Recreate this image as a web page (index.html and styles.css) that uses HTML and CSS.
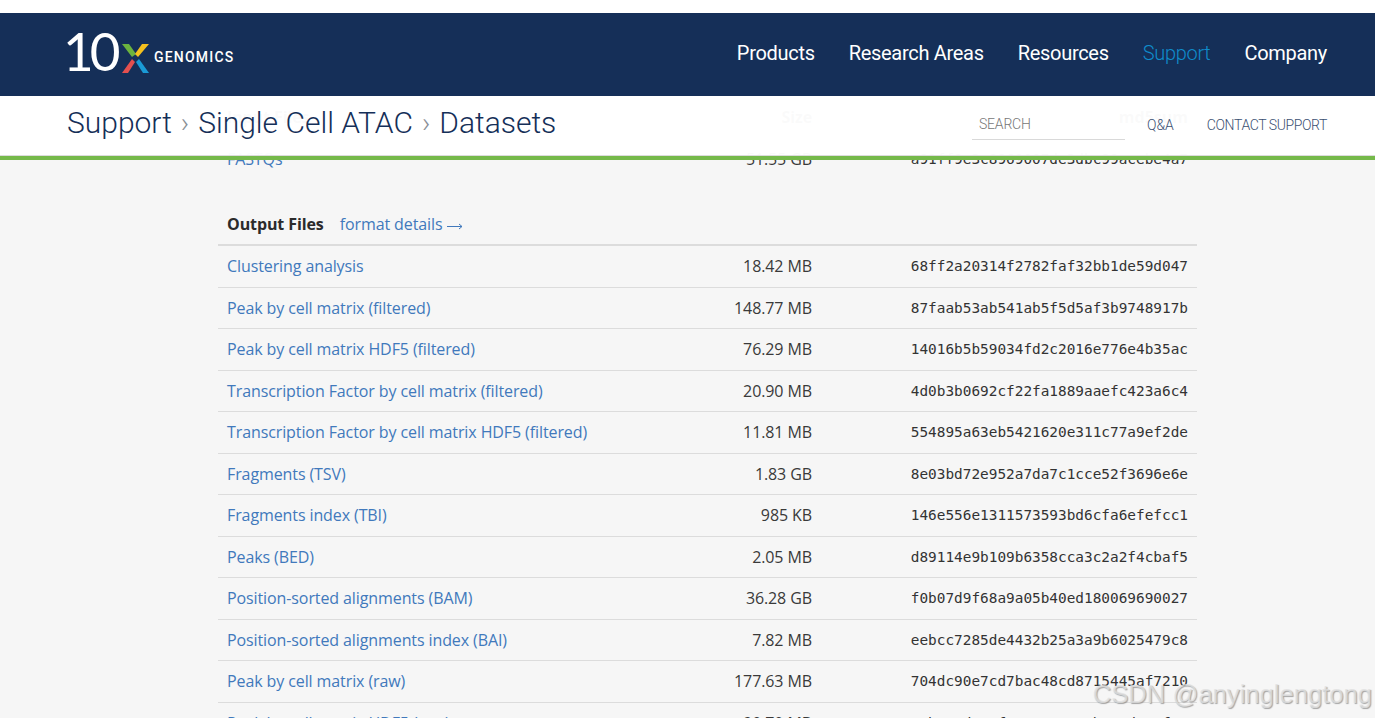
FILE: index.html
```html
<!DOCTYPE html>
<html lang="en">
<head>
<meta charset="utf-8">
<title>Datasets - Single Cell ATAC - Support - 10x Genomics</title>
<link rel="stylesheet" href="styles.css">
</head>
<body>
<header class="site-header">
  <div class="topbar">
    <a class="logo" href="#">
      <span class="logo-ten">10</span>
      <svg class="logo-x" viewBox="0 0 27 29" width="27" height="29" aria-hidden="true">
        <polygon fill="#6cb33f" points="0,0 7,0 14,10 10,13"/>
        <polygon fill="#f4c01e" points="20,0 27,0 16,13 13,10"/>
        <polygon fill="#e4504f" points="0,29 10,15 13,18 6,29"/>
        <polygon fill="#1a9ad6" points="27,29 21,29 14,18 17,15"/>
      </svg>
      <span class="logo-word">GENOMICS</span>
    </a>
    <nav class="mainnav">
      <a href="#">Products</a>
      <a href="#">Research Areas</a>
      <a href="#">Resources</a>
      <a href="#" class="active">Support</a>
      <a href="#">Company</a>
    </nav>
  </div>
  <div class="subbar">
    <div class="crumbs">
      <a href="#">Support</a><span class="sep">›</span><a href="#">Single Cell ATAC</a><span class="sep">›</span><a href="#">Datasets</a>
    </div>
    <div class="subnav">
      <span class="search">SEARCH</span>
      <a href="#">Q&amp;A</a>
      <a href="#">CONTACT SUPPORT</a>
    </div>
  </div>
</header>

<main class="content">
  <section class="files">
    <div class="row head head-input"><span class="name"><b>Input Files</b></span><b class="size">Size</b><b class="md5 md5-head">md5sum</b></div>
    <div class="row row-last"><a class="name" href="#">FASTQs</a><span class="size">51.55 GB</span><code class="md5">a91ff9e3c8969007de3dbc99acebe4a7</code></div>
  </section>
  <section class="files output">
    <div class="row head"><span class="name"><b>Output Files</b><a class="details" href="#">format details <svg class="arrow" viewBox="0 0 16 8" width="16" height="8" aria-hidden="true"><path d="M0 4.5H15M12 2l3 2.5L12 7" fill="none" stroke="currentColor" stroke-width="1"/></svg></a></span></div>
    <div class="row"><a class="name" href="#">Clustering analysis</a><span class="size">18.42 MB</span><code class="md5">68ff2a20314f2782faf32bb1de59d047</code></div>
    <div class="row"><a class="name" href="#">Peak by cell matrix (filtered)</a><span class="size">148.77 MB</span><code class="md5">87faab53ab541ab5f5d5af3b9748917b</code></div>
    <div class="row"><a class="name" href="#">Peak by cell matrix HDF5 (filtered)</a><span class="size">76.29 MB</span><code class="md5">14016b5b59034fd2c2016e776e4b35ac</code></div>
    <div class="row"><a class="name" href="#">Transcription Factor by cell matrix (filtered)</a><span class="size">20.90 MB</span><code class="md5">4d0b3b0692cf22fa1889aaefc423a6c4</code></div>
    <div class="row"><a class="name" href="#">Transcription Factor by cell matrix HDF5 (filtered)</a><span class="size">11.81 MB</span><code class="md5">554895a63eb5421620e311c77a9ef2de</code></div>
    <div class="row"><a class="name" href="#">Fragments (TSV)</a><span class="size">1.83 GB</span><code class="md5">8e03bd72e952a7da7c1cce52f3696e6e</code></div>
    <div class="row"><a class="name" href="#">Fragments index (TBI)</a><span class="size">985 KB</span><code class="md5">146e556e1311573593bd6cfa6efefcc1</code></div>
    <div class="row"><a class="name" href="#">Peaks (BED)</a><span class="size">2.05 MB</span><code class="md5">d89114e9b109b6358cca3c2a2f4cbaf5</code></div>
    <div class="row"><a class="name" href="#">Position-sorted alignments (BAM)</a><span class="size">36.28 GB</span><code class="md5">f0b07d9f68a9a05b40ed180069690027</code></div>
    <div class="row"><a class="name" href="#">Position-sorted alignments index (BAI)</a><span class="size">7.82 MB</span><code class="md5">eebcc7285de4432b25a3a9b6025479c8</code></div>
    <div class="row"><a class="name" href="#">Peak by cell matrix (raw)</a><span class="size">177.63 MB</span><code class="md5">704dc90e7cd7bac48cd8715445af7210</code></div>
    <div class="row"><a class="name" href="#">Peak by cell matrix HDF5 (raw)</a><span class="size">90.70 MB</span><code class="md5">a1b2c3d4e5f60718293a4b5c6d7e8f90</code></div>
  </section>
</main>
<div class="watermark">CSDN @anyinglengtong</div>
</body>
</html>
```

FILE: styles.css
```css
* { box-sizing: border-box; }
html, body { margin: 0; height: 100%; overflow: hidden; }
body {
  background: #f6f6f6;
  color: #3a3a3a;
  font-family: "Open Sans", "Liberation Sans", sans-serif;
  font-size: 16px;
  letter-spacing: -0.1px;
  position: relative;
}
a { color: inherit; text-decoration: none; }

.site-header {
  position: absolute;
  top: 0; left: 0; right: 0;
  z-index: 2;
  border-top: 13px solid #fff;
  letter-spacing: 0;
}
.topbar {
  height: 83px;
  background: #152f58;
  display: flex;
  align-items: center;
  justify-content: space-between;
  padding: 0 48px 3px 67px;
}
.logo { display: flex; align-items: flex-end; height: 39px; color: #fff; }
.logo-ten {
  font-family: Lato, sans-serif;
  font-weight: 400;
  font-size: 53px;
  line-height: 39px;
  letter-spacing: -4px;
  width: 55px;
  margin-left: -4px;
  flex: none;
  position: relative;
  top: -3px;
}
.logo-x { display: block; margin-left: 4px; }
.logo-word {
  font-family: Roboto, sans-serif;
  font-weight: 500;
  font-size: 14px;
  line-height: 14px;
  letter-spacing: 1.2px;
  margin: 0 0 9px 5px;
}
.mainnav { display: flex; gap: 34px; font-family: Roboto, sans-serif; font-size: 20px; color: #fff; }
.mainnav a { letter-spacing: -0.3px; }
.mainnav .active { color: #0f8ccb; font-weight: 300; }

.subbar {
  height: 60px;
  background: rgba(255, 255, 255, 0.975);
  display: flex;
  align-items: center;
  justify-content: space-between;
  padding: 0 48px 7px 67px;
  border-bottom: 1px solid #dcdcdc;
  box-shadow: 0 4px 0 #75b94a;
  color: #152f58;
}
.crumbs { font-family: Roboto, sans-serif; font-weight: 300; font-size: 30px; display: flex; align-items: center; }
.crumbs .sep { color: #8a8f96; margin: 0 9px; font-size: 28px; }
.subnav { display: flex; align-items: center; font-family: Roboto, sans-serif; font-weight: 300; font-size: 14px; color: #3b5072; }
.subnav a { margin-left: 33px; position: relative; top: 3px; letter-spacing: -0.4px; }
.subnav a:nth-child(2) { margin-left: 22px; letter-spacing: 0; }
.search {
  width: 153px;
  height: 32px;
  line-height: 32px;
  padding-left: 7px;
  border-bottom: 1px solid #d9d9d9;
  color: #777;
  position: relative;
  top: 2px;
  letter-spacing: -0.2px;
}

.content { width: 979px; margin-left: 218px; padding-top: 96px; }
.output { margin-top: 24px; }
.row {
  display: grid;
  grid-template-columns: 1fr 160px 376px;
  align-items: center;
  height: 41.5px;
  padding-right: 9px;
  padding-bottom: 1px;
  border-bottom: 1px solid #dcdcdc;
}
.row-last { border-bottom: 0; }
.name { padding-left: 9px; color: #4179bc; }
.size { text-align: right; }
.md5 {
  text-align: right;
  font-family: "DejaVu Sans Mono", "Liberation Mono", monospace;
  font-size: 14.4px;
  letter-spacing: 0;
  color: #333;
}
.md5-head { font-family: "Open Sans", sans-serif; font-size: 16px; }
.head { height: 42.25px; border-bottom: 2px solid #dcdcdc; padding-bottom: 0; }
.head .name { color: #2b2b2b; }
.head b { font-weight: 700; }
.head-input { height: 42.5px; border-bottom-width: 1px; }
.details { color: #4179bc; margin-left: 16px; }
.arrow { display: inline-block; vertical-align: 0; }

.watermark {
  position: absolute;
  right: 3px;
  top: 679px;
  z-index: 3;
  font-family: "Liberation Sans", sans-serif;
  font-size: 25.6px;
  line-height: 30px;
  letter-spacing: 0;
  color: rgba(225, 225, 225, 0.8);
  text-shadow: 1px 1px 1px rgba(110, 110, 110, 0.6);
  white-space: nowrap;
}
```
